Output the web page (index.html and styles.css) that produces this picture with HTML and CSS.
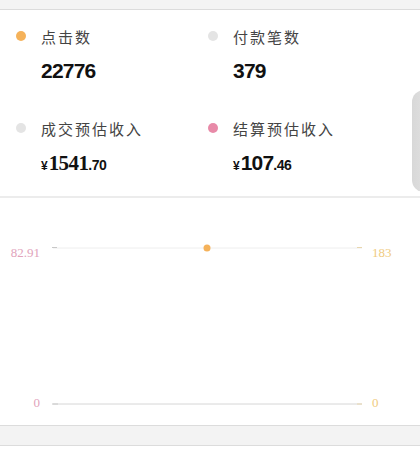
FILE: index.html
```html
<!DOCTYPE html>
<html lang="zh-CN">
<head>
    <meta charset="UTF-8">
    <meta name="viewport" content="width=device-width, initial-scale=1.0">
    <title>数据概览</title>
    <link rel="stylesheet" href="styles.css">
</head>
<body>
    <div class="topbar"></div>

    <!-- 统计数据 -->
    <div class="stats">
        <div class="stat">
            <div class="stat-label"><span class="dot dot-orange"></span>点击数</div>
            <div class="stat-value">22776</div>
        </div>
        <div class="stat">
            <div class="stat-label"><span class="dot dot-gray"></span>付款笔数</div>
            <div class="stat-value">379</div>
        </div>
        <div class="stat">
            <div class="stat-label"><span class="dot dot-gray"></span>成交预估收入</div>
            <div class="stat-value"><span class="yen">¥</span><span class="serif">1541</span><span class="small">.70</span></div>
        </div>
        <div class="stat">
            <div class="stat-label"><span class="dot dot-pink"></span>结算预估收入</div>
            <div class="stat-value"><span class="yen">¥</span>107<span class="small">.46</span></div>
        </div>
    </div>

    <div class="divider"></div>

    <!-- 折线图 -->
    <div class="chart">
        <svg width="420" height="227" viewBox="0 0 420 227">
            <line x1="53" y1="50" x2="362" y2="50" stroke="#eeeeee" stroke-width="1"/>
            <line x1="52" y1="49.5" x2="57" y2="49.5" stroke="#c8c8c8" stroke-width="1"/>
            <line x1="357" y1="49.5" x2="362" y2="49.5" stroke="#e8d6ae" stroke-width="1"/>
            <circle cx="207" cy="50" r="3.5" fill="#f5b25a"/>

            <line x1="53" y1="206" x2="362" y2="206" stroke="#d6d6d6" stroke-width="1"/>
            <line x1="52" y1="206" x2="58" y2="206" stroke="#c8c8c8" stroke-width="1"/>
            <line x1="357" y1="206" x2="362" y2="206" stroke="#e8d6ae" stroke-width="1"/>

            <text class="axis-left" x="40" y="59" text-anchor="end">82.91</text>
            <text class="axis-left" x="40" y="209" text-anchor="end">0</text>
            <text class="axis-right" x="372" y="59">183</text>
            <text class="axis-right" x="372" y="209">0</text>
        </svg>
    </div>

    <div class="bottombar"></div>

    <div class="side-handle"></div>
</body>
</html>
```

FILE: styles.css
```css
body {
    margin: 0;
    background-color: #fff;
    font-family: "Noto Sans CJK SC", "Liberation Sans", sans-serif;
    color: #333;
    position: relative;
    height: 460px;
    overflow: hidden;
}

.topbar {
    height: 9px;
    background-color: #f4f4f4;
    border-bottom: 1px solid #dcdcdc;
}

.stats {
    display: grid;
    grid-template-columns: 192px 1fr;
    padding: 14px 0 21px 16px;
    row-gap: 33px;
}

.stat-label {
    display: flex;
    align-items: center;
    height: 24px;
    font-size: 15px;
    letter-spacing: 2px;
    color: #444;
}

.dot {
    width: 10px;
    height: 10px;
    border-radius: 50%;
    margin-right: 15px;
    flex-shrink: 0;
}

.dot-orange {
    background-color: #f5b25a;
}

.dot-gray {
    background-color: #e4e4e4;
}

.dot-pink {
    background-color: #e88aa8;
}

.stat-value {
    margin-top: 11px;
    margin-left: 25px;
    height: 24px;
    line-height: 24px;
    font-family: "Liberation Sans", Arial, sans-serif;
    font-weight: bold;
    font-size: 21px;
    letter-spacing: -0.8px;
    color: #111;
}

.stat-value .yen {
    font-size: 12px;
    font-weight: bold;
    letter-spacing: 0;
    margin-right: 1px;
}

.stat-value .serif {
    font-family: "Liberation Serif", "Times New Roman", serif;
    font-size: 21px;
    letter-spacing: -0.6px;
}

.stat-value .small {
    font-size: 14px;
    letter-spacing: -0.5px;
}

.divider {
    height: 2px;
    background-color: #ececec;
}

.chart {
    height: 227px;
}

.chart svg {
    display: block;
}

.axis-left,
.axis-right {
    font-family: "Liberation Serif", serif;
    font-size: 13px;
}

.axis-left {
    fill: #e1a3bb;
}

.axis-right {
    fill: #f0cb7e;
}

.bottombar {
    height: 19px;
    background-color: #f3f3f3;
    border-top: 1px solid #dcdcdc;
    border-bottom: 1px solid #dcdcdc;
}

.side-handle {
    position: absolute;
    right: -20px;
    top: 90px;
    width: 28px;
    height: 102px;
    border-radius: 12px;
    background: linear-gradient(to right, #d8d8d8, #e8e8e8);
}
```
